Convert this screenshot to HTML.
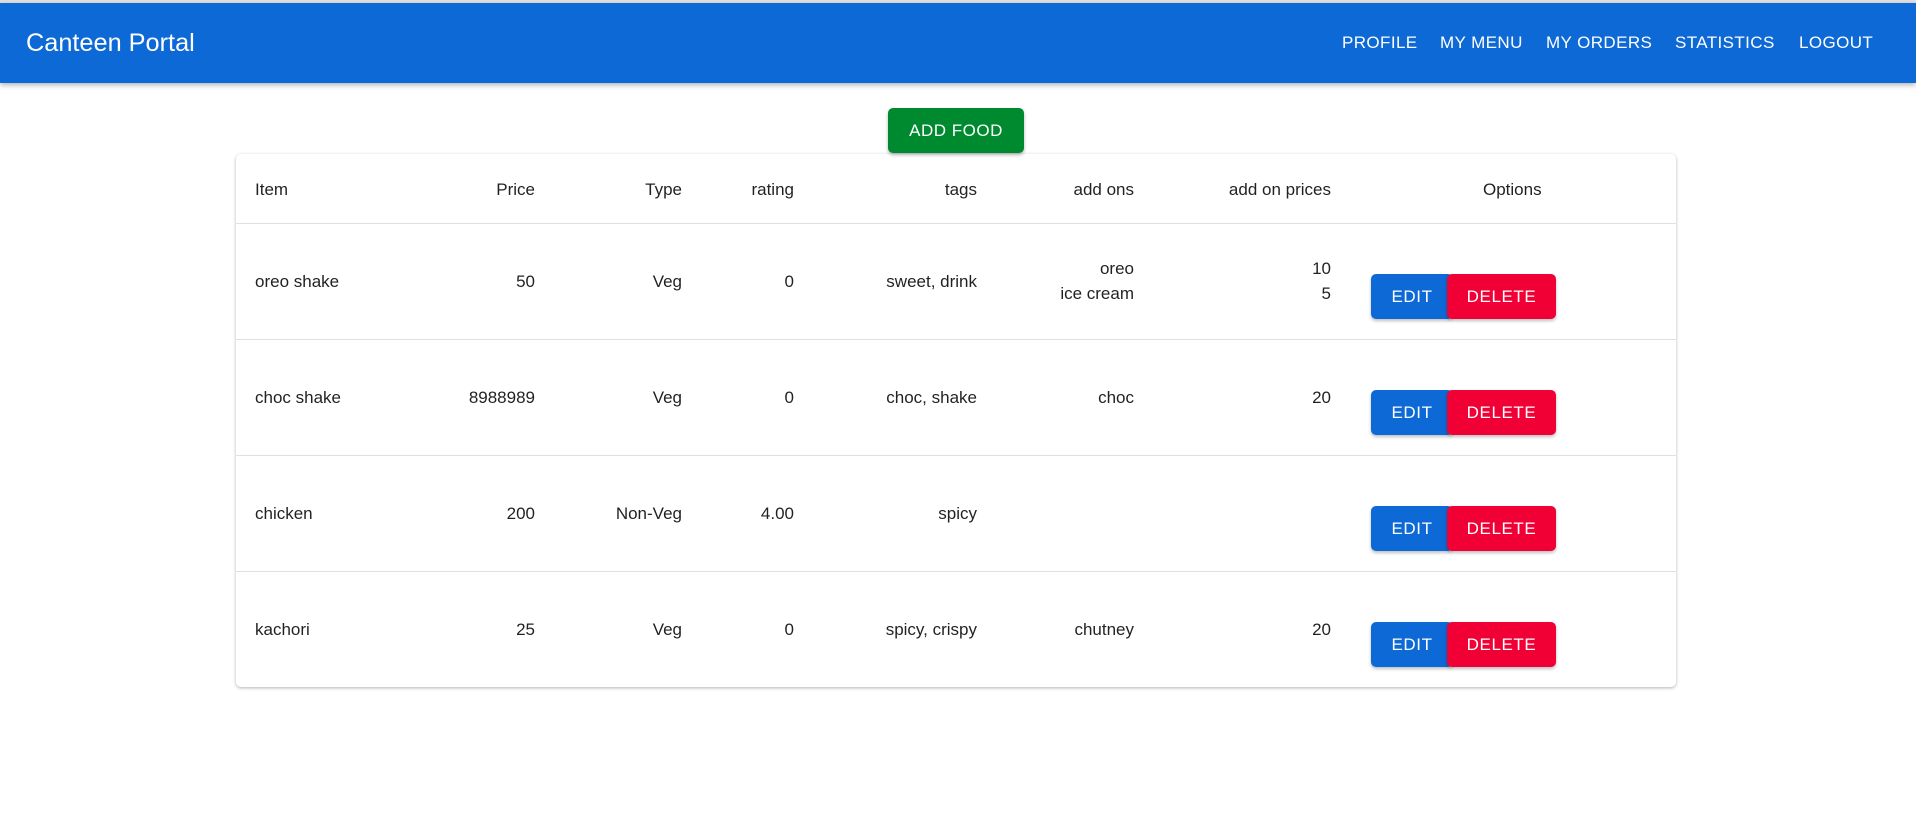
<!DOCTYPE html>
<html><head><meta charset="utf-8"><style>
*{box-sizing:border-box;margin:0;padding:0}
body{width:1916px;height:836px;background:#fff;font-family:"Liberation Sans",Arial,sans-serif;position:relative;overflow:hidden;color:rgba(0,0,0,.87)}
.bar{position:absolute;left:0;top:3px;width:1916px;height:80px;background:#0d69d6;box-shadow:0 2px 5px rgba(0,0,0,.3)}
.top{position:absolute;left:0;top:0;width:1916px;height:3px;background:#e0e0e0}
.title{position:absolute;left:26px;top:29px;font-size:25.3px;color:#fff}
.nav{position:absolute;top:33px;font-size:17px;color:#fff;letter-spacing:.4px}
.add{position:absolute;left:888px;top:108px;width:136px;height:45px;background:#008a30;color:#fff;border-radius:5px;font-size:17px;letter-spacing:.5px;display:flex;align-items:center;justify-content:center;box-shadow:0 2px 3px rgba(0,0,0,.3)}
.card{position:absolute;left:236px;top:154px;width:1440px;height:533px;border-radius:5px;box-shadow:0 1px 3px rgba(0,0,0,.3)}
.line{position:absolute;left:236px;width:1440px;height:1px;background:#e0e0e0}
.c{position:absolute;font-size:17px;line-height:24px;margin-top:1px}
.r{text-align:right}
.b{position:absolute;height:45px;color:#fff;font-size:17px;letter-spacing:.6px;display:flex;align-items:center;justify-content:center;border-radius:5px;box-shadow:0 2px 3px rgba(0,0,0,.25)}
.e{left:1371px;width:82px;background:#0d69d6}
.d{left:1447px;width:109px;background:#f00034}
</style></head><body>
<div class="top"></div>
<div class="bar"></div>
<div class="title">Canteen Portal</div>
<div class="nav" style="left:1342px">PROFILE</div>
<div class="nav" style="left:1440px">MY MENU</div>
<div class="nav" style="left:1546px">MY ORDERS</div>
<div class="nav" style="left:1675px">STATISTICS</div>
<div class="nav" style="left:1799px">LOGOUT</div>
<div class="add">ADD FOOD</div>
<div class="card"></div>
<div class="line" style="top:223px"></div>
<div class="line" style="top:339px"></div>
<div class="line" style="top:455px"></div>
<div class="line" style="top:571px"></div>

<div class="c" style="left:255px;top:177px">Item</div>
<div class="c r" style="right:1381px;top:177px">Price</div>
<div class="c r" style="right:1234px;top:177px">Type</div>
<div class="c r" style="right:1122px;top:177px">rating</div>
<div class="c r" style="right:939px;top:177px">tags</div>
<div class="c r" style="right:782px;top:177px">add ons</div>
<div class="c r" style="right:585px;top:177px">add on prices</div>
<div class="c" style="left:1483px;top:177px">Options</div>

<div class="c" style="left:255px;top:269px">oreo shake</div>
<div class="c r" style="right:1381px;top:269px">50</div>
<div class="c r" style="right:1234px;top:269px">Veg</div>
<div class="c r" style="right:1122px;top:269px">0</div>
<div class="c r" style="right:939px;top:269px">sweet, drink</div>
<div class="c r" style="right:782px;top:255px;line-height:25px">oreo<br>ice cream</div>
<div class="c r" style="right:585px;top:255px;line-height:25px">10<br>5</div>
<div class="b e" style="top:274px">EDIT</div><div class="b d" style="top:274px">DELETE</div>

<div class="c" style="left:255px;top:385px">choc shake</div>
<div class="c r" style="right:1381px;top:385px">8988989</div>
<div class="c r" style="right:1234px;top:385px">Veg</div>
<div class="c r" style="right:1122px;top:385px">0</div>
<div class="c r" style="right:939px;top:385px">choc, shake</div>
<div class="c r" style="right:782px;top:385px">choc</div>
<div class="c r" style="right:585px;top:385px">20</div>
<div class="b e" style="top:390px">EDIT</div><div class="b d" style="top:390px">DELETE</div>

<div class="c" style="left:255px;top:501px">chicken</div>
<div class="c r" style="right:1381px;top:501px">200</div>
<div class="c r" style="right:1234px;top:501px">Non-Veg</div>
<div class="c r" style="right:1122px;top:501px">4.00</div>
<div class="c r" style="right:939px;top:501px">spicy</div>
<div class="b e" style="top:506px">EDIT</div><div class="b d" style="top:506px">DELETE</div>

<div class="c" style="left:255px;top:617px">kachori</div>
<div class="c r" style="right:1381px;top:617px">25</div>
<div class="c r" style="right:1234px;top:617px">Veg</div>
<div class="c r" style="right:1122px;top:617px">0</div>
<div class="c r" style="right:939px;top:617px">spicy, crispy</div>
<div class="c r" style="right:782px;top:617px">chutney</div>
<div class="c r" style="right:585px;top:617px">20</div>
<div class="b e" style="top:622px">EDIT</div><div class="b d" style="top:622px">DELETE</div>
</body></html>
